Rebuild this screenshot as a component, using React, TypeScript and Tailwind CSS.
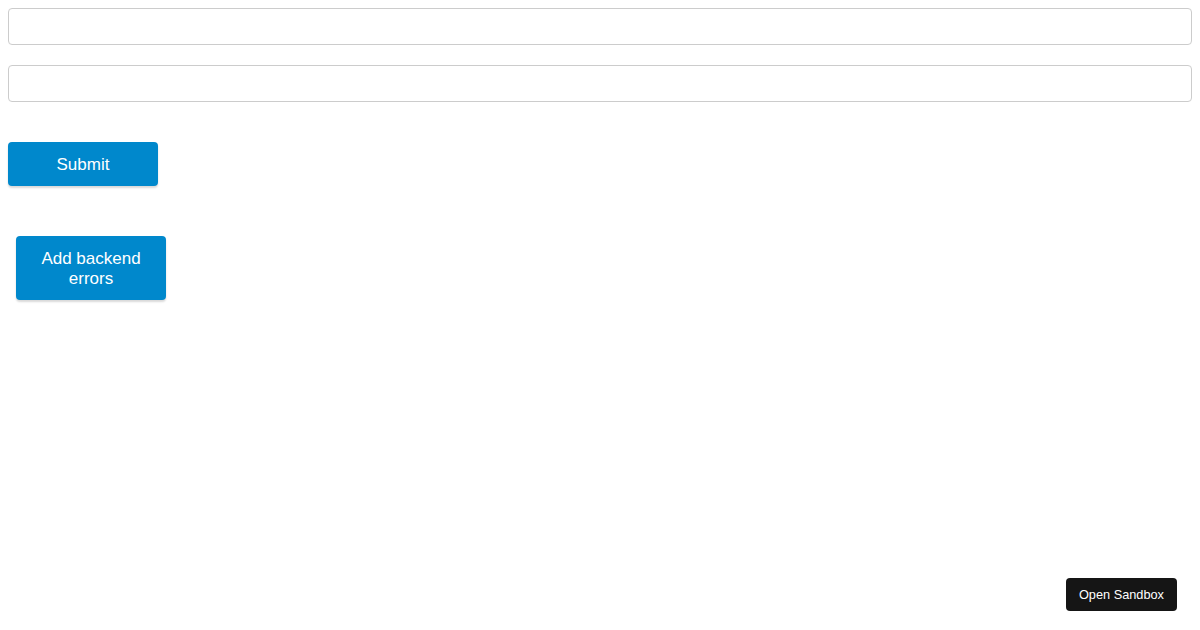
export default function App() {
  return (
    <div className="relative min-h-[630px] bg-white p-2 font-['Liberation_Sans',Arial,sans-serif]">
      <form className="flex flex-col" onSubmit={(e) => e.preventDefault()}>
        <input className="h-[37px] w-full rounded border border-[#cccccc] bg-white px-2 outline-none" />
        <input className="mt-5 h-[37px] w-full rounded border border-[#cccccc] bg-white px-2 outline-none" />
        <button
          type="submit"
          className="mt-10 h-[44px] w-[150px] rounded bg-[#0088cc] pt-[2px] text-[17px] text-white shadow-[0_2px_2px_rgba(0,0,0,0.15)]"
        >
          Submit
        </button>
      </form>
      <div className="mt-[50px] px-2">
        <button className="h-[64px] w-[150px] rounded bg-[#0088cc] px-3 pt-[1px] text-[17px] leading-[20px] text-white shadow-[0_2px_2px_rgba(0,0,0,0.15)]">
          Add backend errors
        </button>
      </div>
      <button className="absolute bottom-[19px] right-[23px] h-[33px] rounded bg-[#151515] px-[13px] text-[12.75px] text-white">
        Open Sandbox
      </button>
    </div>
  );
}
